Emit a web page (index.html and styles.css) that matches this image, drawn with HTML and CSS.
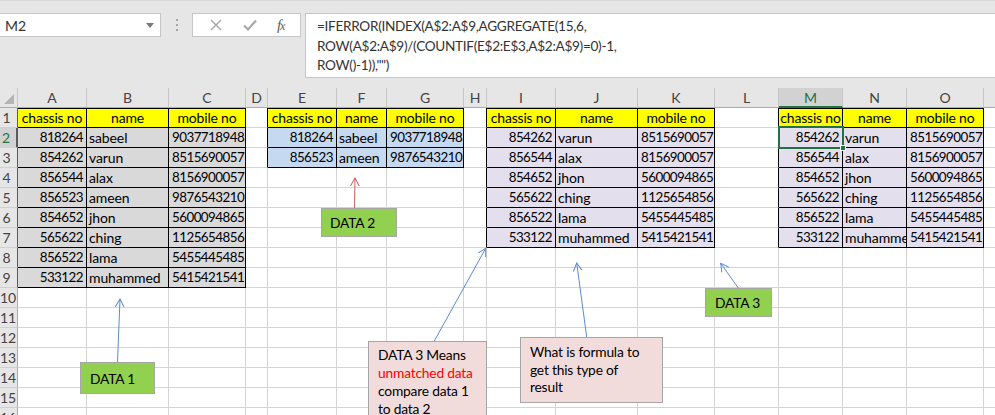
FILE: index.html
```html
<!DOCTYPE html>
<html>
<head>
<meta charset="utf-8">
<link rel="stylesheet" href="styles.css">
</head>
<body>
<div class="app">
  <div class="toolbar">
    <div class="namebox"><span class="nb-text">M2</span><span class="nb-drop"></span></div>
    <div class="dots"><i></i><i></i><i></i></div>
    <div class="fbtns">
      <svg class="ic" width="14" height="14" viewBox="0 0 14 14"><path d="M2 2 L12 12 M12 2 L2 12" stroke="#a3a3a3" stroke-width="1.4" fill="none"/></svg>
      <svg class="ic" width="16" height="14" viewBox="0 0 16 14"><path d="M2 7.5 L6 11.5 L14 2.5" stroke="#a8a8a8" stroke-width="2.2" fill="none"/></svg>
      <span class="fx">f<span class="fx-x">x</span></span>
    </div>
    <div class="formula">
      <div>=IFERROR(INDEX(A$2:A$9,AGGREGATE(15,6,</div>
      <div>ROW(A$2:A$9)/(COUNTIF(E$2:E$3,A$2:A$9)=0)-1,</div>
      <div>ROW()-1)),"")</div>
    </div>
  </div>

  <div class="sheet">
    <!-- header -->
    <div class="corner"><span class="tri"></span></div>
    <div class="ch">A</div><div class="ch">B</div><div class="ch">C</div><div class="ch">D</div><div class="ch">E</div><div class="ch">F</div><div class="ch">G</div><div class="ch">H</div><div class="ch">I</div><div class="ch">J</div><div class="ch">K</div><div class="ch">L</div><div class="ch chsel">M</div><div class="ch">N</div><div class="ch">O</div><div class="ch"></div>

    <!-- row 1 -->
    <div class="rh tb">1</div>
    <div class="y">chassis no</div><div class="y">name</div><div class="y">mobile no</div><div class="bk"></div>
    <div class="y">chassis no</div><div class="y">name</div><div class="y">mobile no</div><div class="bk"></div>
    <div class="y">chassis no</div><div class="y">name</div><div class="y">mobile no</div><div class="bk"></div>
    <div class="y">chassis no</div><div class="y">name</div><div class="y">mobile no</div><div></div>

    <!-- row 2 -->
    <div class="rh tb rsel">2</div>
    <div class="g n">818264</div><div class="g t">sabeel</div><div class="g m">9037718948</div><div class="bk"></div>
    <div class="b n">818264</div><div class="b t">sabeel</div><div class="b m">9037718948</div><div class="bk"></div>
    <div class="l n">854262</div><div class="l t">varun</div><div class="l m">8515690057</div><div class="bk"></div>
    <div class="l n">854262</div><div class="l t">varun</div><div class="l m">8515690057</div><div></div>

    <!-- row 3 -->
    <div class="rh tb">3</div>
    <div class="g n">854262</div><div class="g t">varun</div><div class="g m">8515690057</div><div class="bk"></div>
    <div class="b n">856523</div><div class="b t">ameen</div><div class="b m">9876543210</div><div class="bk"></div>
    <div class="l n">856544</div><div class="l t">alax</div><div class="l m">8156900057</div><div class="bk"></div>
    <div class="l n">856544</div><div class="l t">alax</div><div class="l m">8156900057</div><div></div>

    <!-- row 4 -->
    <div class="rh tb">4</div>
    <div class="g n">856544</div><div class="g t">alax</div><div class="g m">8156900057</div><div></div>
    <div></div><div></div><div></div><div class="bk"></div>
    <div class="l n">854652</div><div class="l t">jhon</div><div class="l m">5600094865</div><div class="bk"></div>
    <div class="l n">854652</div><div class="l t">jhon</div><div class="l m">5600094865</div><div></div>

    <!-- row 5 -->
    <div class="rh tb">5</div>
    <div class="g n">856523</div><div class="g t">ameen</div><div class="g m">9876543210</div><div></div>
    <div></div><div></div><div></div><div class="bk"></div>
    <div class="l n">565622</div><div class="l t">ching</div><div class="l m">1125654856</div><div class="bk"></div>
    <div class="l n">565622</div><div class="l t">ching</div><div class="l m">1125654856</div><div></div>

    <!-- row 6 -->
    <div class="rh tb">6</div>
    <div class="g n">854652</div><div class="g t">jhon</div><div class="g m">5600094865</div><div></div>
    <div></div><div></div><div></div><div class="bk"></div>
    <div class="l n">856522</div><div class="l t">lama</div><div class="l m">5455445485</div><div class="bk"></div>
    <div class="l n">856522</div><div class="l t">lama</div><div class="l m">5455445485</div><div></div>

    <!-- row 7 -->
    <div class="rh tb">7</div>
    <div class="g n">565622</div><div class="g t">ching</div><div class="g m">1125654856</div><div></div>
    <div></div><div></div><div></div><div class="bk"></div>
    <div class="l n">533122</div><div class="l t">muhammed</div><div class="l m">5415421541</div><div class="bk"></div>
    <div class="l n">533122</div><div class="l t">muhammed</div><div class="l m">5415421541</div><div></div>

    <!-- row 8 -->
    <div class="rh tb">8</div>
    <div class="g n">856522</div><div class="g t">lama</div><div class="g m">5455445485</div><div></div>
    <div></div><div></div><div></div><div></div><div></div><div></div><div></div><div></div><div></div><div></div><div></div><div></div>

    <!-- row 9 -->
    <div class="rh tb">9</div>
    <div class="g n">533122</div><div class="g t">muhammed</div><div class="g m">5415421541</div><div></div>
    <div></div><div></div><div></div><div></div><div></div><div></div><div></div><div></div><div></div><div></div><div></div><div></div>

    <!-- rows 10-16 -->
    <div class="rh">10</div><div></div><div></div><div></div><div></div><div></div><div></div><div></div><div></div><div></div><div></div><div></div><div></div><div></div><div></div><div></div><div></div>
    <div class="rh">11</div><div></div><div></div><div></div><div></div><div></div><div></div><div></div><div></div><div></div><div></div><div></div><div></div><div></div><div></div><div></div><div></div>
    <div class="rh">12</div><div></div><div></div><div></div><div></div><div></div><div></div><div></div><div></div><div></div><div></div><div></div><div></div><div></div><div></div><div></div><div></div>
    <div class="rh">13</div><div></div><div></div><div></div><div></div><div></div><div></div><div></div><div></div><div></div><div></div><div></div><div></div><div></div><div></div><div></div><div></div>
    <div class="rh">14</div><div></div><div></div><div></div><div></div><div></div><div></div><div></div><div></div><div></div><div></div><div></div><div></div><div></div><div></div><div></div><div></div>
    <div class="rh">15</div><div></div><div></div><div></div><div></div><div></div><div></div><div></div><div></div><div></div><div></div><div></div><div></div><div></div><div></div><div></div><div></div>
    <div class="rh">16</div><div></div><div></div><div></div><div></div><div></div><div></div><div></div><div></div><div></div><div></div><div></div><div></div><div></div><div></div><div></div><div></div>
  </div>

  <div class="selbox"><span class="handle"></span></div>

  <svg class="arrows" width="995" height="415" viewBox="0 0 995 415">
    <defs>
      <marker id="hb" markerWidth="10" markerHeight="10" refX="8" refY="5" orient="auto" markerUnits="userSpaceOnUse">
        <path d="M0 0.6 L8 5 L0 9.4" fill="none" stroke="#5a8ccf" stroke-width="1"/>
      </marker>
      <marker id="hr" markerWidth="10" markerHeight="10" refX="8" refY="5" orient="auto" markerUnits="userSpaceOnUse">
        <path d="M0 0.6 L8 5 L0 9.4" fill="none" stroke="#c9605d" stroke-width="1"/>
      </marker>
    </defs>
    <line x1="117.5" y1="362" x2="120" y2="299" stroke="#5a8ccf" stroke-width="1" marker-end="url(#hb)"/>
    <line x1="354.5" y1="208" x2="355" y2="178" stroke="#c9605d" stroke-width="1" marker-end="url(#hr)"/>
    <line x1="434.3" y1="341" x2="485.7" y2="248.3" stroke="#5a8ccf" stroke-width="1" marker-end="url(#hb)"/>
    <line x1="586.7" y1="337" x2="576.7" y2="263" stroke="#5a8ccf" stroke-width="1" marker-end="url(#hb)"/>
    <line x1="738.3" y1="288" x2="720.7" y2="263.3" stroke="#5a8ccf" stroke-width="1" marker-end="url(#hb)"/>
  </svg>

  <div class="note green data1">DATA 1</div>
  <div class="note green data2">DATA 2</div>
  <div class="note green data3">DATA 3</div>
  <div class="note pink means">DATA 3 Means<br><span class="red">unmatched data</span><br>compare data 1<br>to data 2</div>
  <div class="note pink ask">What is formula to<br>get this type of<br>result</div>
</div>
</body>
</html>
```

FILE: styles.css
```css
* { box-sizing: border-box; }
html, body { margin: 0; padding: 0; background: #fff; }
body { width: 995px; height: 415px; overflow: hidden; font-family: Lato, "Open Sans", sans-serif; }

.app { position: relative; width: 995px; height: 415px; overflow: hidden; }

/* ---------- toolbar ---------- */
.toolbar {
  height: 88px;
  background: #e6e6e6;
  border-top: 1px solid #d9d9d9;
  display: flex;
  align-items: flex-start;
  padding-top: 12px;
}
.namebox {
  width: 161px; height: 24px;
  background: #fff;
  border: 1px solid #c6c6c6; border-left: none;
  display: flex; align-items: center; justify-content: space-between;
  padding: 0 6px 0 5px;
  font-size: 14px; color: #333;
}
.nb-drop {
  width: 0; height: 0;
  border-left: 4.5px solid transparent; border-right: 4.5px solid transparent;
  border-top: 5px solid #7a7a7a;
}
.dots { width: 31px; height: 24px; display: flex; flex-direction: column; align-items: center; justify-content: center; gap: 3px; }
.dots i { width: 2px; height: 2px; background: #a6a6a6; display: block; }
.fbtns {
  width: 109px; height: 24px;
  background: #fff; border: 1px solid #c6c6c6;
  display: flex; align-items: center; justify-content: space-around;
  padding: 0 6px 0 6px;
}
.ic { display: block; }
.fx { font-family: "Liberation Serif", serif; font-style: italic; font-size: 15px; color: #5c5c5c; letter-spacing: -1px; }
.fx-x { font-size: 12px; }
.formula {
  margin-left: 4px;
  flex: 1;
  height: 65px;
  background: #fff;
  border: 1px solid #c6c6c6; border-right: none;
  padding: 3px 0 0 11px;
  font-size: 13.6px; letter-spacing: -0.3px; line-height: 19.5px; color: #333;
}

/* ---------- sheet ---------- */
.sheet {
  display: grid;
  grid-template-columns: 18px 69px 82px 77px 22px 69px 50px 77px 23px 69px 82px 77px 64px 64px 64px 77px 40px;
  grid-auto-rows: 20px;
  font-size: 14px;
  letter-spacing: -0.1px;
  color: #000;
}
.sheet > div {
  border-right: 1px solid #d4d4d4;
  border-bottom: 1px solid #d4d4d4;
  white-space: nowrap;
  overflow: hidden;
  line-height: 19px;
}
.corner { background: #e6e6e6; position: relative; border-bottom-color: #ababab !important; border-right-color: #c6c6c6 !important; }
.tri { position: absolute; right: 3px; bottom: 3px; width: 0; height: 0; border-left: 10px solid transparent; border-bottom: 10px solid #b4b4b4; }
.sheet > .ch {
  background: #e6e6e6; color: #444; text-align: center;
  border-right-color: #c6c6c6; border-bottom-color: #ababab;
  font-size: 14px; letter-spacing: 0; line-height: 20px;
}
.sheet > .chsel { background: #d2d2d2; color: #217346; border-bottom: 2px solid #217346; }
.sheet > .rh {
  background: #e6e6e6; color: #444; text-align: center;
  padding-right: 4px;
  border-right-color: #ababab; border-bottom-color: #d0d0d0;
  overflow: visible; font-size: 14px; letter-spacing: 0;
}
.sheet > .rh.tb { border-right-color: #5a5a5a; }
.sheet > .rsel { background: #d2d2d2; color: #217346; border-right: 2px solid #217346; }

.sheet > .y, .sheet > .g, .sheet > .b, .sheet > .l { border-right-color: #000; border-bottom-color: #000; }
.sheet > .bk { border-right-color: #000; }
.sheet > .y { background: #ffff00; text-align: center; box-shadow: inset 0 1px 0 #000; letter-spacing: -0.2px; }
.g { background: #d9d9d9; }
.b { background: #c5d9f1; }
.l { background: #e4dfec; }
.sheet > .n { text-align: right; padding-right: 3px; font-size: 13.4px; letter-spacing: -0.55px; }
.t { text-align: left; padding-left: 2px; }
.sheet > .m { text-align: left; padding-left: 3px; font-size: 13.4px; letter-spacing: -0.55px; }

/* selection */
.selbox {
  position: absolute; left: 778px; top: 126px; width: 66px; height: 23px;
  border: 2px solid #217346;
}
.handle {
  position: absolute; right: -4px; bottom: -4px; width: 6px; height: 6px;
  background: #217346; border: 1px solid #fff;
}

/* overlay shapes */
.arrows { position: absolute; left: 0; top: 0; pointer-events: none; }
.note {
  position: absolute;
  border: 1px solid #a6a6a6;
  font-size: 13.8px; color: #000;
  letter-spacing: -0.2px;
}
.green { background: #92d050; display: flex; align-items: center; padding-left: 9px; }
.pink { background: #f2dcdb; }
.data1 { left: 80px; top: 362px; width: 75px; height: 32px; }
.data2 { left: 321px; top: 208px; width: 76px; height: 29px; padding-left: 8px; }
.data3 { left: 705px; top: 288px; width: 67px; height: 29px; }
.means { left: 368px; top: 341px; width: 119px; height: 90px; padding: 4px 0 0 9px; line-height: 18px; }
.ask { left: 520px; top: 337px; width: 143px; height: 66px; padding: 5px 0 0 9px; line-height: 17.5px; }
.red { color: #ff0000; }
```
